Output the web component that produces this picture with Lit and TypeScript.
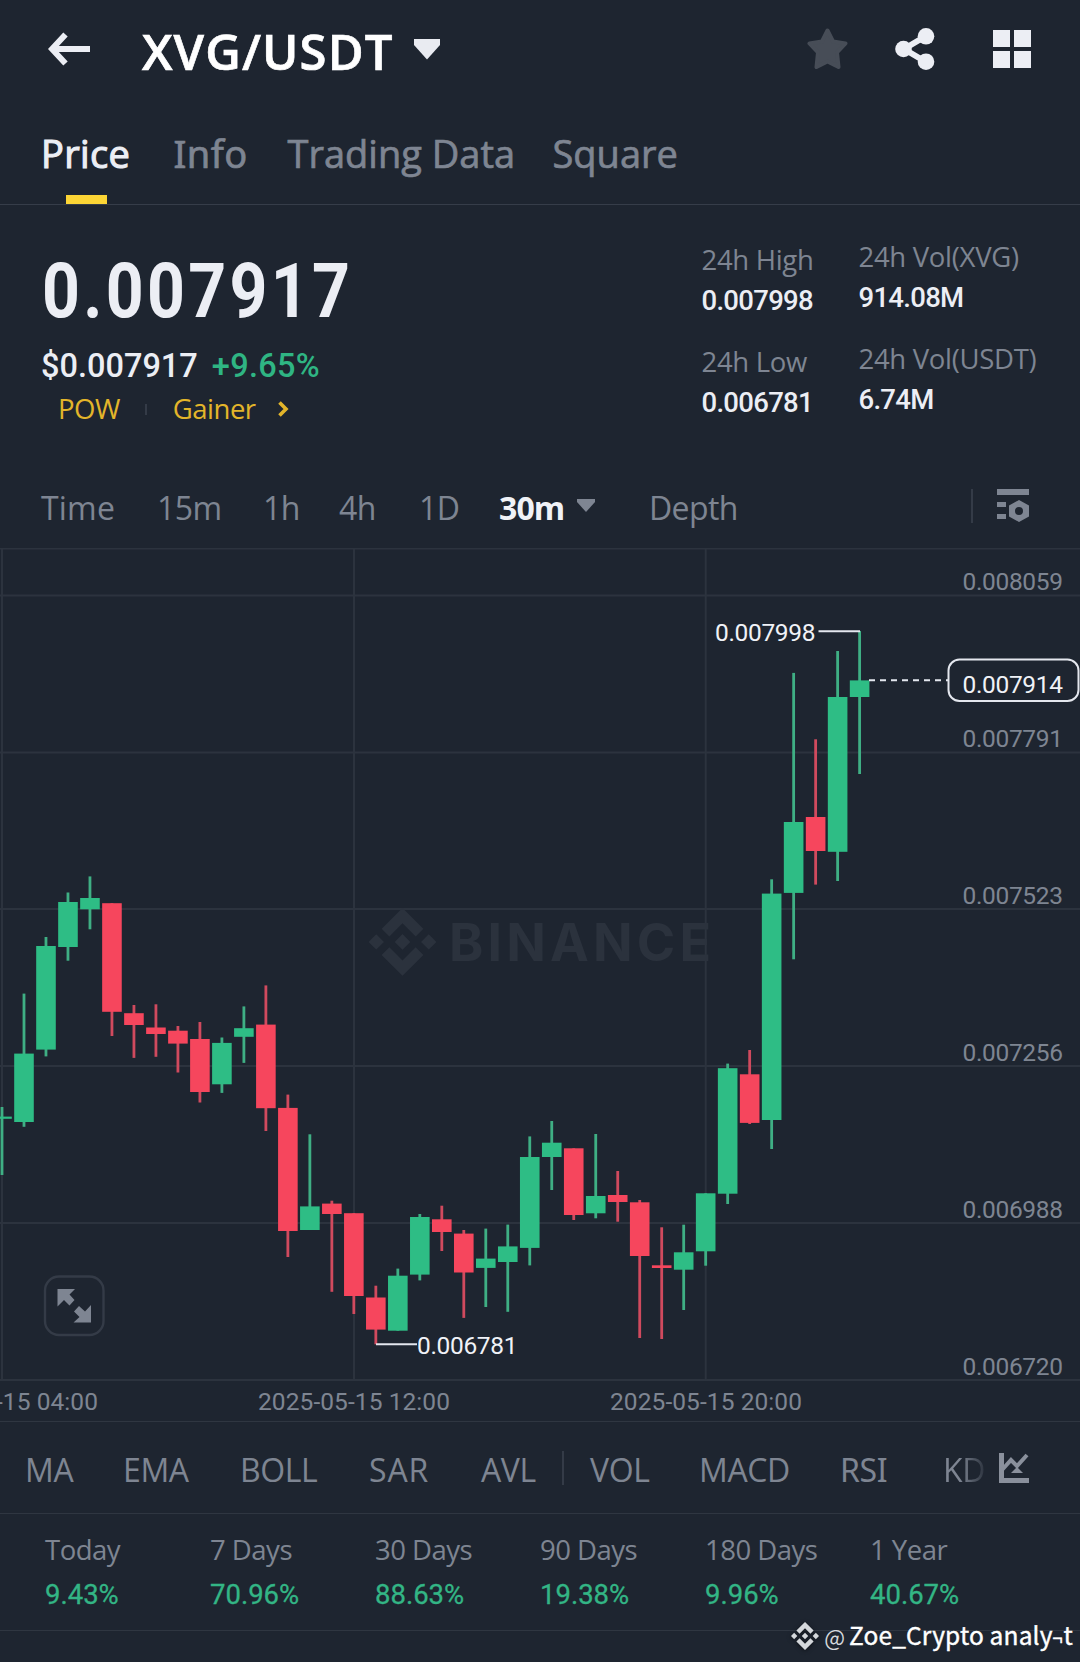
import { LitElement, html, svg, css } from "lit";
import { customElement, property } from "lit/decorators.js";

type Candle = [high: number, top: number, bottom: number, low: number, up: 0 | 1];

const BINANCE_MARK =
  "M38.73 53.2l24.59-24.58 24.6 24.6 14.3-14.31L63.32 0l-38.9 38.9zM0 63.31l14.3-14.31 14.31 14.31-14.31 14.3zM38.73 73.41l24.59 24.59 24.6-24.6 14.31 14.29-38.9 38.91-38.91-38.88zM98 63.31l14.3-14.31 14.31 14.3-14.31 14.32zM77.83 63.3L63.32 48.78 48.81 63.28l14.51 14.5z";

/* Candle extents on the chart's vertical axis. */
const CANDLES: Candle[] = [
  [1107, 1116.6, 1118.8, 1175, 1],
  [993.6, 1053.6, 1122, 1126.8, 1],
  [937, 946, 1049.6, 1056.4, 1],
  [892.5, 902, 947, 960.7, 1],
  [876.4, 898, 909.3, 929.3, 1],
  [903.2, 903.2, 1011.8, 1036, 0],
  [1005, 1013.2, 1025, 1057.9, 0],
  [1004.3, 1027.5, 1034, 1056.8, 0],
  [1026, 1030.7, 1043.6, 1072.5, 0],
  [1022, 1039, 1092, 1102.5, 0],
  [1037.5, 1042.9, 1084.3, 1092.9, 1],
  [1006.4, 1028.2, 1036.8, 1062.9, 1],
  [985.4, 1024.6, 1108.2, 1131, 0],
  [1094.6, 1107.9, 1231, 1257, 0],
  [1134.3, 1206.4, 1230, 1230, 1],
  [1200.7, 1203.6, 1214, 1291.8, 0],
  [1213.2, 1213.2, 1296, 1314, 0],
  [1285.7, 1297.5, 1329.6, 1344.3, 0],
  [1268.6, 1275.7, 1330.7, 1330.7, 1],
  [1214, 1217, 1274.6, 1280.4, 1],
  [1205.7, 1219.3, 1232, 1251, 0],
  [1230, 1233.6, 1272.5, 1317.9, 0],
  [1228.6, 1258.6, 1267.9, 1307, 1],
  [1224.6, 1246.4, 1262, 1311.8, 1],
  [1136.4, 1157, 1247.9, 1265.4, 1],
  [1121, 1142.7, 1157, 1190, 1],
  [1148.3, 1148.3, 1215, 1220, 0],
  [1134, 1196, 1213.3, 1218.3, 1],
  [1171, 1195, 1202, 1221.7, 0],
  [1200, 1202.3, 1256, 1338, 0],
  [1227.3, 1265.3, 1268, 1339, 0],
  [1224.7, 1252.3, 1269.7, 1310, 1],
  [1193.3, 1193.3, 1251.3, 1265.7, 1],
  [1063.6, 1068.2, 1193.7, 1204, 1],
  [1050, 1074.3, 1122.9, 1124, 0],
  [879.3, 893.6, 1120, 1149, 1],
  [672.9, 822, 892.9, 959.3, 1],
  [739.3, 817, 851, 884.6, 0],
  [651, 697, 851.8, 881, 1],
  [631, 680.4, 697, 774, 1],
];

@customElement("candle-chart")
class CandleChart extends LitElement {
  static styles = css`
    :host { display: block; }
    svg { display: block; }
    text { font-family: Roboto, "Liberation Sans", sans-serif; font-size: 24.5px; }
    .grid { stroke: #2c333e; stroke-width: 2; }
    .axis { fill: #7e8592; }
    .bright { fill: #f0f2f7; }
    .mark { fill: #2b323d; }
    .brand { font-family: Inter, "Liberation Sans", sans-serif; font-weight: 700; font-size: 52px; fill: #2b323d; }
    .up { fill: #2ebd85; }
    .down { fill: #f6465d; }
    .upw { fill: #3faf84; }
    .downw { fill: #d04a5e; }
    .lead { stroke: #e4e7ee; stroke-width: 2; fill: none; }
    .btn { fill: #1e2530; stroke: #343b47; stroke-width: 2.4; }
    .ico { fill: #7e8592; }
  `;

  render() {
    const x = (i: number) => 2 + i * 21.99;
    const levels: [string, number][] = [
      ["0.008059", 595.5], ["0.007791", 752.5], ["0.007523", 909],
      ["0.007256", 1066], ["0.006988", 1223], ["0.006720", 1380],
    ];
    return html`<svg width="1080" height="873" viewBox="0 548 1080 873">
      <line class="grid" x1="0" x2="1080" y1="548.5" y2="548.5"></line>
      ${levels.map(([, y]) => svg`<line class="grid" x1="0" x2="1080" y1=${y} y2=${y}></line>`)}
      ${[2, 354, 705.7].map((gx) => svg`<line class="grid" x1=${gx} x2=${gx} y1="549" y2="1380"></line>`)}
      <path class="mark" transform="translate(368.6 908) scale(.5355)" d=${BINANCE_MARK}></path>
      <text class="brand" x="449" y="961" textLength="262">BINANCE</text>
      ${CANDLES.map(([h, t, b, l, up], i) => svg`
        <rect class=${up ? "upw" : "downw"} x=${x(i) - 1.4} y=${h} width="2.8" height=${l - h}></rect>
        <rect class=${up ? "up" : "down"} x=${x(i) - 9.8} y=${t} width="19.6" height=${b - t}></rect>`)}
      ${levels.map(([s, y]) => svg`<text class="axis" x="962.5" y=${y - 5.5} textLength="100.5">${s}</text>`)}
      <path class="lead" d="M818.5 631.2H860"></path>
      <text class="bright" x="715" y="640.7" textLength="100.5">0.007998</text>
      <path class="lead" d="M376 1344.3H417"></path>
      <text class="bright" x="417" y="1353.6" textLength="100.5">0.006781</text>
      <path class="lead" stroke-dasharray="6 5" d="M869 680.3H948"></path>
      <rect class="lead" x="948.5" y="659.5" width="130" height="41.5" rx="11"></rect>
      <text class="bright" x="962.5" y="692.6" textLength="100.5">0.007914</text>
      <text class="axis" x="-94" y="1409.8" textLength="192">2025-05-15 04:00</text>
      <text class="axis" x="258" y="1409.8" textLength="192">2025-05-15 12:00</text>
      <text class="axis" x="610" y="1409.8" textLength="192">2025-05-15 20:00</text>
      <rect class="btn" x="45" y="1276.5" width="58.5" height="58.5" rx="14"></rect>
      <path class="ico" d="M57.5 1289H75L69.5 1294.5L74.5 1300L69.5 1305.5L64 1300L57.5 1306.5ZM91 1322.5H73.5L79.5 1317L74 1311.500L79 1306L85 1311.500L91 1305Z"></path>
    </svg>`;
  }
}

@customElement("stat-pair")
class StatPair extends LitElement {
  @property() label = "";
  @property() value = "";
  static styles = css`
    :host { display: block; height: 102px; white-space: nowrap; }
    .label { font: 400 27.5px/40px "Open Sans", sans-serif; color: #7e8592; height: 40.6px; padding-top: 1px; letter-spacing: -0.3px; }
    .value { font: 500 27.5px/40px Roboto, sans-serif; color: #eceef4; letter-spacing: -0.7px; }
  `;
  render() {
    return html`<div class="label">${this.label}</div><div class="value">${this.value}</div>`;
  }
}

@customElement("app-root")
class AppRoot extends LitElement {
  static styles = css`
    :host {
      display: block; position: relative; width: 1080px; height: 1662px; overflow: hidden;
      background: #1e2530; color: #7e8592; font-family: "Open Sans", "Noto Sans", sans-serif;
      white-space: nowrap;
    }
    * { box-sizing: border-box; }
    svg { display: block; }
    .head { display: flex; align-items: center; height: 100px; padding: 0 49px 2px 48px; }
    .title { font-size: 49px; font-weight: 600; line-height: 60px; color: #fff; margin: 3px 0 0 51px; width: 272px; letter-spacing: 1.1px; -webkit-text-stroke: 0.7px #fff; }
    .spacer { flex: 1; }
    .head .star { margin-right: 47px; }
    .head .share { margin-right: 58px; }
    .tabs { display: grid; grid-template-columns: 132.5px 114px 265px 1fr; height: 105px; padding: 28px 0 0 41px; border-bottom: 1px solid #363d49; font-size: 38px; line-height: 50px; }
    .tab { display: flex; flex-direction: column; align-items: flex-start; -webkit-text-stroke: 0.7px currentColor; }
    .tab.on { color: #eceef4; -webkit-text-stroke-width: 1.1px; letter-spacing: 0.3px; }
    .tab.on::after { content: ""; width: 41px; height: 9px; background: #fcd535; margin: 17px 0 0 25px; }
    .serif-i { font-family: "Noto Sans", sans-serif; }
    .tab.serif-i { letter-spacing: 0.4px; }
    .summary { display: grid; grid-template-columns: 660.5px 157px 1fr; height: 255px; padding: 31px 0 0 41px; }
    .quote { padding-top: 15px; }
    .last { font: 700 76px/80px Roboto, sans-serif; color: #eceef4; letter-spacing: 3.8px; transform: translateX(1px) scaleX(0.87); transform-origin: left; }
    .sub { display: flex; gap: 14px; margin-top: 17px; font: 500 32.5px/36px Roboto, sans-serif; color: #eceef4; }
    .pos { color: #2fb583; letter-spacing: 0.3px; }
    .tags { display: flex; align-items: center; margin-top: 7px; padding-left: 17px; font-size: 27.5px; line-height: 36px; color: #e3b52a; letter-spacing: -0.5px; }
    .sep { width: 2px; height: 11px; background: #343b47; margin: 0 26px 0 25px; }
    .chev { margin-left: 22px; }
    .col1 { padding-top: 3px; }
    .intervals { display: flex; height: 88px; padding: 28px 0 0 41px; font-size: 32px; line-height: 40px; letter-spacing: -0.6px; }
    .w-time { width: 116px; letter-spacing: 0.2px; } .w-15m { width: 106px; } .w-1h { width: 76px; } .w-4h { width: 80px; } .w-1d { width: 80px; }
    .w-30m { width: 150px; display: flex; gap: 13px; color: #f0f2f7; font-weight: 700; letter-spacing: -0.9px; }
    .caret { margin-top: 11px; }
    .w-depth { width: 322px; }
    .bar { width: 2px; height: 34px; margin: 1px 24px 0 0; background: #343b47; }
    .intervals .tune { margin-top: -1px; }
    .indicators { display: grid; grid-template-columns: 98px 117px 129px 112px 81px 28px 109px 141px 103px 54px 1fr; height: 93px; padding: 28px 0 0 25px; border-top: 1px solid #2f3641; border-bottom: 1px solid #2f3641; font-size: 32px; line-height: 40px; letter-spacing: -0.4px; }
    .indicators svg { margin: -1px 0 0 2px; }
    .indicators .sar { letter-spacing: 0.9px; }
    .thin { width: 2px; height: 34px; background: #343b47; margin-top: 1px; }
    .fade { background: linear-gradient(90deg, #7e8592 40%, #1e2530 110%); background-clip: text; -webkit-background-clip: text; color: transparent; }
    .perf { display: grid; grid-template-columns: 165px 165px 165px 165px 165px 1fr; height: 117px; padding: 18px 0 0 45px; border-bottom: 1px solid #2f3641; font-size: 27.5px; line-height: 36px; }
    .span { letter-spacing: -0.5px; }
    .pct { font: 400 27.5px/36px Roboto, sans-serif; margin-top: 9px; color: #33b585; -webkit-text-stroke: 0.3px #33b585; }
    .credit { position: absolute; right: 7px; bottom: 9px; display: flex; align-items: center; font: 400 24.5px/32px "Noto Sans CJK SC", "Noto Sans", sans-serif; color: #fff; -webkit-text-stroke: 0.4px #fff; letter-spacing: 0.15px; }
    .credit .at { margin: 0 4px 0 5px; color: #d5d8dc; -webkit-text-stroke: 0; font-size: 22px; }
    .credit svg { filter: drop-shadow(0 1px 2px #0008); }
    .tick { display: inline-block; width: 11px; font-size: 18px; }
  `;

  render() {
    const perf = [
      ["Today", "9.43%"], ["7 Days", "70.96%"], ["30 Days", "88.63%"],
      ["90 Days", "19.38%"], ["180 Days", "9.96%"], ["1 Year", "40.67%"],
    ];
    return html`
      <div class="head">
        <svg width="43" height="34" viewBox="0 0 43 34"><path d="M42 17H5M17.500 2.500L4 17L17.500 31.500" fill="none" stroke="#eceef4" stroke-width="6"></path></svg>
        <div class="title">XVG/USDT</div>
        <svg width="26" height="21" viewBox="0 0 26 21"><path d="M0 0H26V6L13 20.500L0 6Z" fill="#e9ebf1"></path></svg>
        <div class="spacer"></div>
        <svg class="star" width="41" height="42" viewBox="0 0 41 42"><path d="M20.500 2.500L26 13.500L38.500 15.500L30 24.500L31.500 39L20.500 33.500L9.500 39L11 24.500L2.500 15.500L15 13.500Z" fill="#474d57" stroke="#474d57" stroke-width="4" stroke-linejoin="round"></path></svg>
        <svg class="share" width="40" height="42" viewBox="0 0 40 42"><path d="M31 8L9 21L31 34" fill="none" stroke="#eceef4" stroke-width="6"></path><circle cx="31" cy="8.300" r="8.300" fill="#eceef4"></circle><circle cx="8.500" cy="21" r="8.300" fill="#eceef4"></circle><circle cx="31" cy="33.700" r="8.300" fill="#eceef4"></circle></svg>
        <svg width="38" height="38" viewBox="0 0 38 38"><path d="M0 0H17V17H0ZM21 0H38V17H21ZM0 21H17V38H0ZM21 21H38V38H21Z" fill="#eceef4"></path></svg>
      </div>
      <div class="tabs">
        <div class="tab on">Price</div><div class="tab serif-i">Info</div><div class="tab">Trading Data</div><div class="tab">Square</div>
      </div>
      <div class="summary">
        <div class="quote">
          <div class="last">0.007917</div>
          <div class="sub"><span>$0.007917</span><span class="pos">+9.65%</span></div>
          <div class="tags"><span>POW</span><i class="sep"></i><span>Gainer</span>
            <svg class="chev" width="11" height="16" viewBox="0 0 11 16"><path d="M1.500 1.500L8 8L1.500 14.500" fill="none" stroke="#e3b52a" stroke-width="3.600"></path></svg>
          </div>
        </div>
        <div class="col1"><stat-pair label="24h High" value="0.007998"></stat-pair><stat-pair label="24h Low" value="0.006781"></stat-pair></div>
        <div class="col2"><stat-pair label="24h Vol(XVG)" value="914.08M"></stat-pair><stat-pair label="24h Vol(USDT)" value="6.74M"></stat-pair></div>
      </div>
      <div class="intervals">
        <div class="w-time">Time</div><div class="w-15m">15m</div><div class="w-1h">1h</div><div class="w-4h">4h</div><div class="w-1d">1D</div>
        <div class="w-30m"><span>30m</span><svg class="caret" width="18" height="13" viewBox="0 0 18 13"><path d="M0 0H18V3L9 13L0 3Z" fill="#7e8592"></path></svg></div>
        <div class="w-depth">Depth</div>
        <div class="bar"></div>
        <svg class="tune" width="33" height="36" viewBox="0 0 33 36"><path d="M0 2H32V8H0ZM0 15H9V20H0ZM0 27H9V32H0Z" fill="#7e8592"></path><path fill-rule="evenodd" d="M22 13L32 18.500V29.500L22 35L12 29.500V18.500ZM22 20A4 4 0 1 0 22 28A4 4 0 1 0 22 20Z" fill="#7e8592"></path></svg>
      </div>
      <candle-chart></candle-chart>
      <div class="indicators">
        <span>MA</span><span>EMA</span><span>BOLL</span><span class="sar">SAR</span><span>AVL</span><i class="thin"></i>
        <span>VOL</span><span>MACD</span><span class="serif-i">RSI</span><div><span class="fade">KD</span></div>
        <svg width="30" height="34" viewBox="0 0 30 34"><path d="M0 4H5V29H30V34H0Z" fill="#8a909c"></path><path d="M3 21L12 11L18 17L28 6" fill="none" stroke="#8a909c" stroke-width="4"></path><path d="M12 24L18 18L24 24Z" fill="#8a909c"></path></svg>
      </div>
      <div class="perf">
        ${perf.map(([k, v]) => html`<div><div class="span">${k}</div><div class="pct">${v}</div></div>`)}
      </div>
      <div class="credit">
        <svg width="28" height="28" viewBox="0 0 126.600 126.600"><path fill="#d5d8dc" d=${BINANCE_MARK}></path></svg>
        <span class="at">@</span><span>Zoe_Crypto analy<span class="tick">¬</span>t</span>
      </div>`;
  }
}
